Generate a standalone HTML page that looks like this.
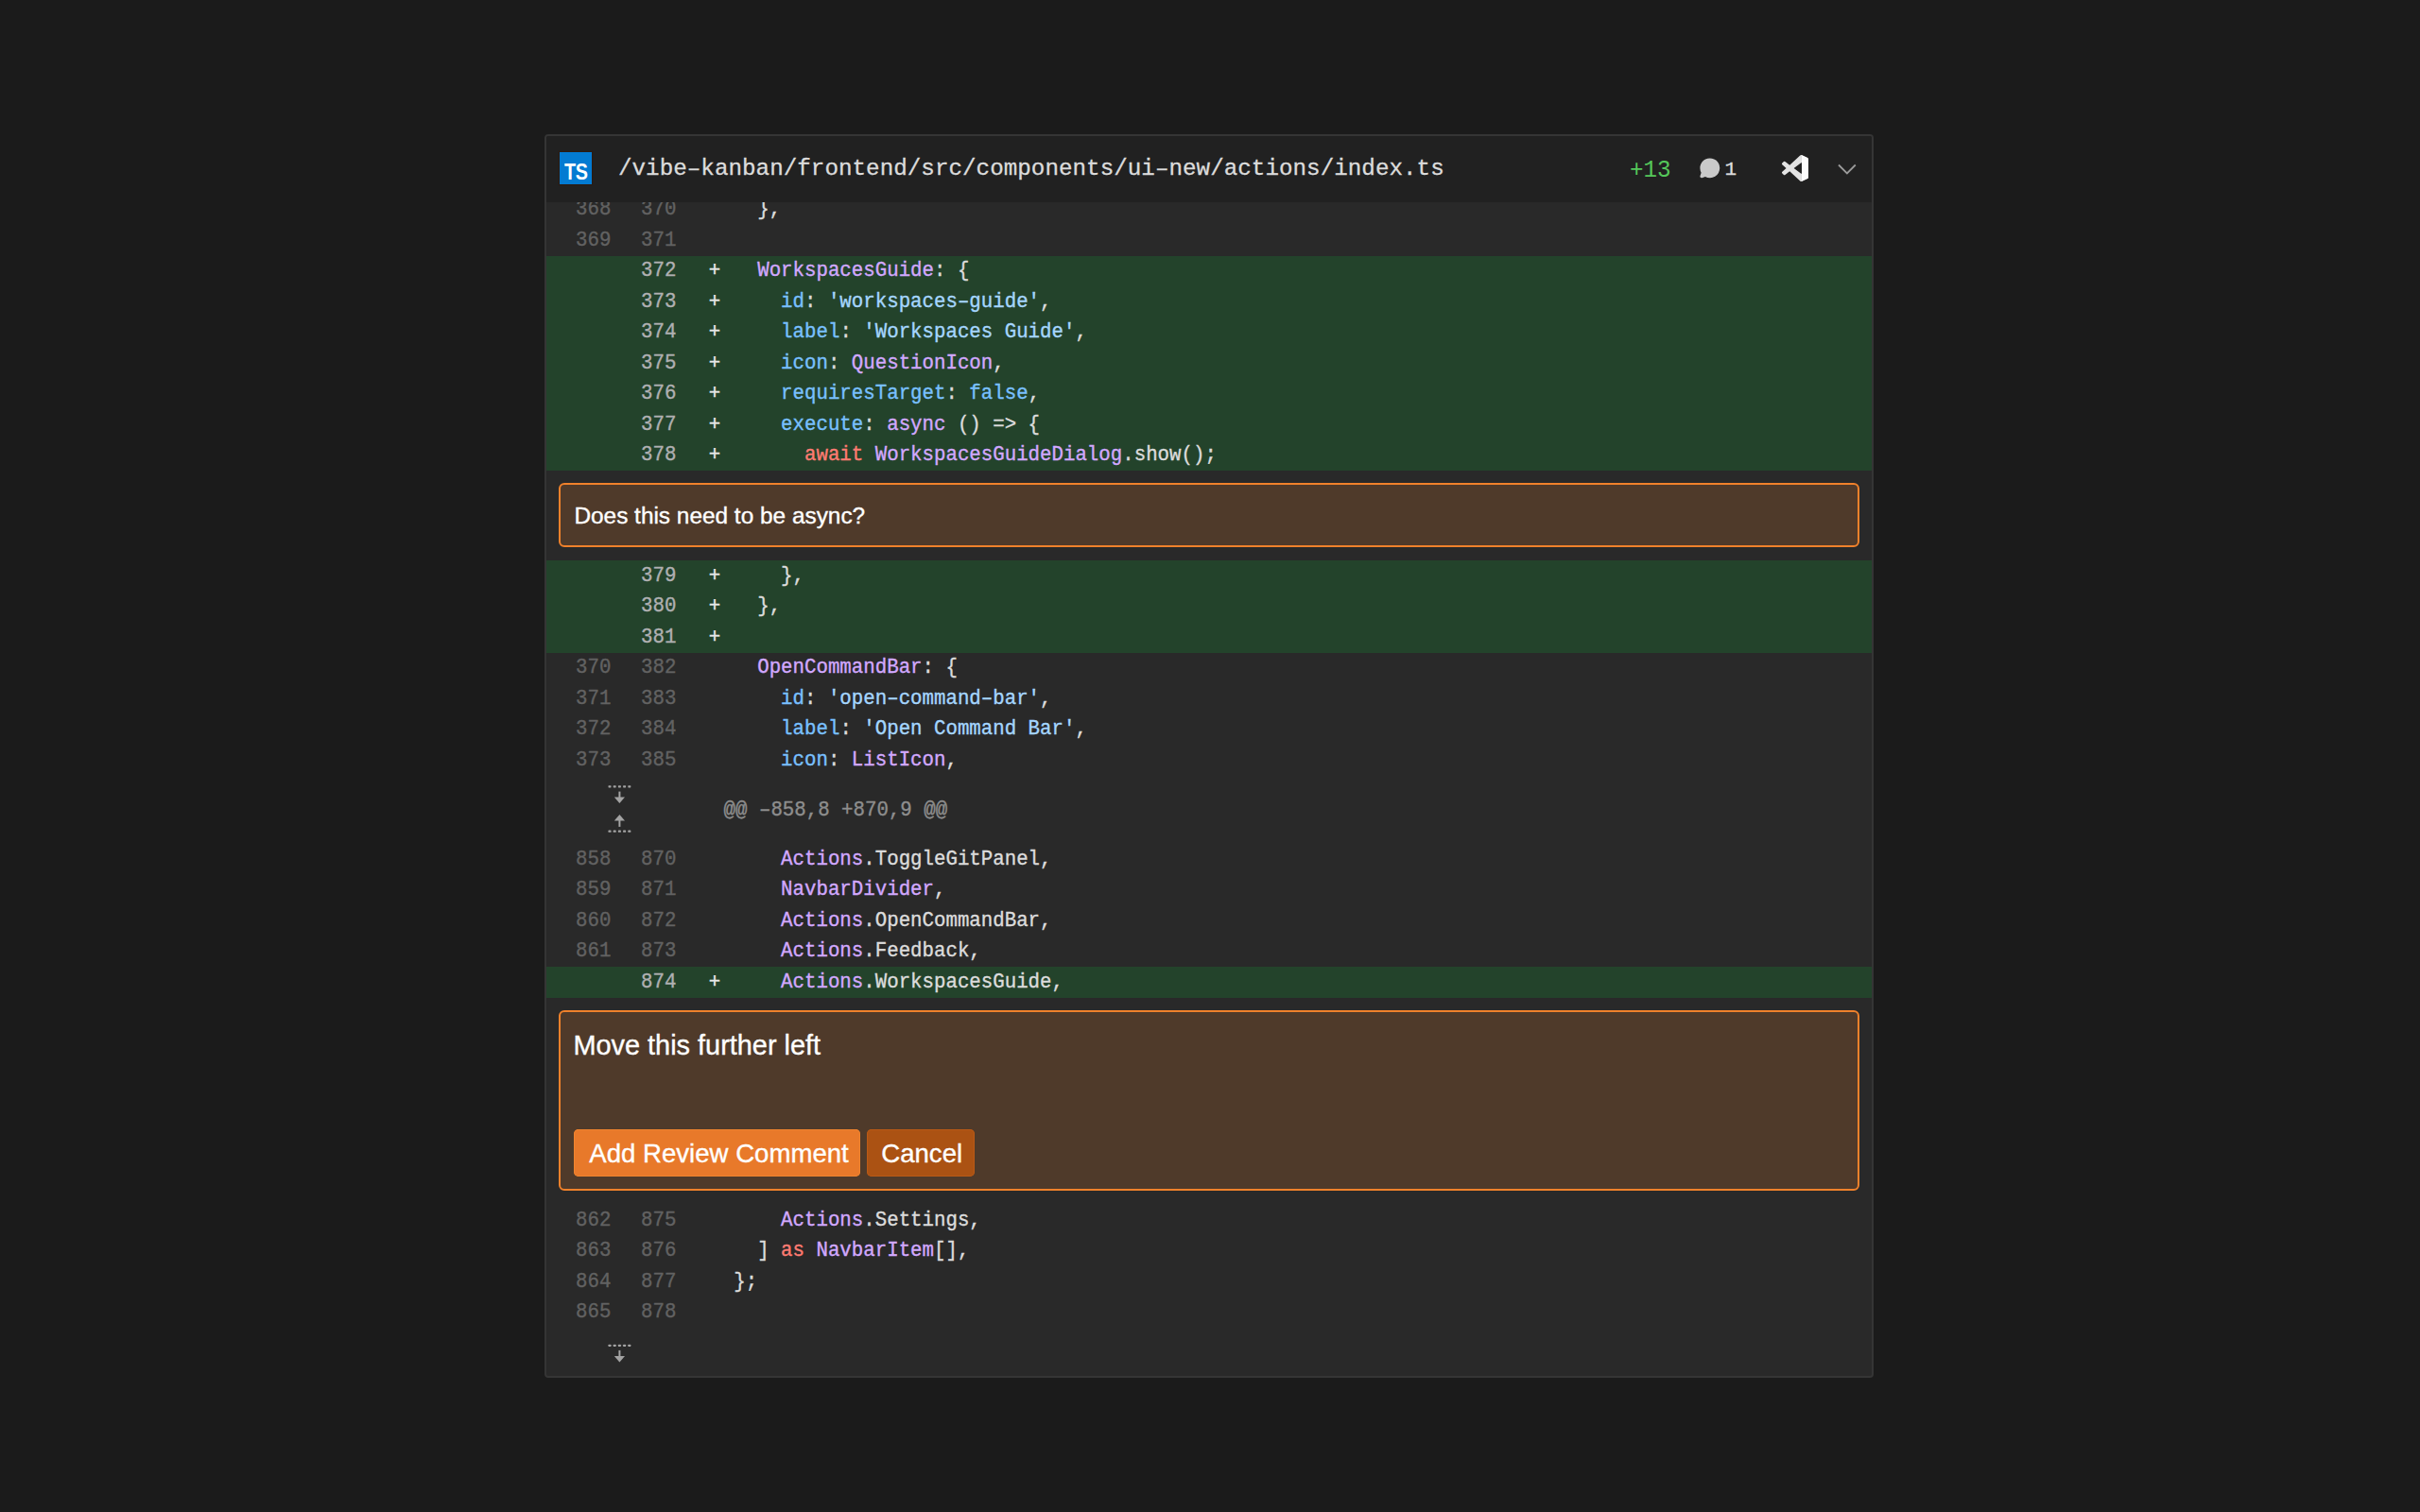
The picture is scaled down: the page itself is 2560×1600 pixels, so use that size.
<!DOCTYPE html>
<html><head><meta charset="utf-8"><style>
*{box-sizing:border-box;margin:0;padding:0}
html,body{width:2560px;height:1600px;background:#1b1b1b;overflow:hidden}
.card{position:absolute;left:576px;top:142px;width:1406px;height:1316px;border:2px solid #353535;border-radius:4px;background:#292929;overflow:hidden}
.hdr{position:absolute;left:0;top:0;right:0;height:70px;background:#212121;z-index:5}
.row{position:absolute;left:0;right:0;height:32.5px;line-height:32.5px;font-family:"Liberation Mono",monospace;font-size:20.76px;color:#dcdcdc;white-space:pre}
.row.add{background:#23432b}
.row>span{position:absolute;top:0.7px;transform:scaleY(1.1);transform-origin:0 21.8px;-webkit-text-stroke:0.35px currentColor}
.ln1,.ln2{color:#626262;text-align:right;width:37.38px}
.add .ln2{color:#b0b0b2}
.ln1{left:31.00px}
.ln2{left:100.00px}
.pl{left:171.80px;color:#e8e8e8}
.code{left:198.30px}
.k{color:#79c0ff} .s{color:#a5d6ff} .e{color:#d2a8ff} .w{color:#ff7b72}
.cbox{position:absolute;left:13.40px;width:1375.40px;border:2px solid #f0812b;border-radius:6px;background:#4f3a2a;font-family:"Liberation Sans",sans-serif;color:#fff;-webkit-text-stroke:0.35px #fff}
.ctext1{position:absolute;left:14px;top:18px;font-size:24.4px;line-height:30px}
.ctext2{position:absolute;left:13px;top:18.5px;font-size:28.9px;line-height:34px}
.btn{position:absolute;top:124.00px;height:50.2px;border-radius:5px;font-size:27.6px;line-height:50px;color:#fff;text-align:center}
.b1{left:13.60px;width:303.10px;background:#e8792a;box-shadow:inset 0 0 0 1px #f0842f;padding-left:4px;padding-top:1.5px}
.b2{left:323.80px;width:114.00px;background:#ab5213;box-shadow:inset 0 0 0 1px #bb5a16;padding-left:2px;padding-top:1.5px}
.htxt{position:absolute;left:187.60px;line-height:32.5px;font-family:"Liberation Mono",monospace;font-size:20.76px;color:#8e8e8e;white-space:pre;transform:scaleY(1.1);transform-origin:0 21.8px;-webkit-text-stroke:0.35px currentColor}
.mono{font-family:"Liberation Mono",monospace;white-space:pre;position:absolute;-webkit-text-stroke:0.3px currentColor}
</style></head>
<body>
<div class="card">
<div class="hdr">
<div style="position:absolute;left:13.50px;top:17.00px;width:34.5px;height:34px;background:#037bd2;box-shadow:0 0 0 1.3px #2a1c14"><span style="position:absolute;left:5.6px;top:8.6px;line-height:23px;font-family:'Liberation Sans',sans-serif;font-weight:bold;font-size:23px;color:#fff;letter-spacing:-0.5px;transform:scale(0.86,1.04);transform-origin:0 0;display:block;white-space:pre">TS</span></div>
<div class="mono" style="left:76.00px;top:14.50px;font-size:24.28px;line-height:40px;color:#dcdcdc">/vibe–kanban/frontend/src/components/ui–new/actions/index.ts</div>
<div class="mono" style="left:1146.00px;top:16.50px;font-size:24.28px;line-height:40px;color:#55c75a;-webkit-text-stroke:0;transform:scaleY(1.1);transform-origin:0 26.4px">+13</div>
<svg style="position:absolute;left:1217.70px;top:21.00px" width="25.7" height="25.7" viewBox="0 0 256 256"><path fill="#c9c9c9" d="M232,128A104,104,0,0,1,79.12,219.82L45.07,231.17a16,16,0,0,1-20.24-20.24l11.35-34.05A104,104,0,1,1,232,128Z"/></svg>
<div class="mono" style="left:1246.50px;top:16.40px;font-size:21px;line-height:40px;color:#dedede">1</div>
<svg style="position:absolute;left:1307.00px;top:20.00px" width="28" height="28" viewBox="0 0 24 24"><defs><clipPath id="vc"><path d="M23.15 2.587L18.21.21a1.494 1.494 0 0 0-1.705.29l-9.46 8.63-4.12-3.128a.999.999 0 0 0-1.276.057L.327 7.261A1 1 0 0 0 .326 8.74L3.899 12 .326 15.26a1 1 0 0 0 .001 1.479L1.65 17.94a.999.999 0 0 0 1.276.057l4.12-3.128 9.46 8.63a1.492 1.492 0 0 0 1.704.29l4.942-2.377A1.5 1.5 0 0 0 24 20.06V3.939a1.5 1.5 0 0 0-.85-1.352zm-5.146 14.861L10.826 12l7.178-5.448v10.896z"/></clipPath></defs><path fill="#e3e3e3" d="M23.15 2.587L18.21.21a1.494 1.494 0 0 0-1.705.29l-9.46 8.63-4.12-3.128a.999.999 0 0 0-1.276.057L.327 7.261A1 1 0 0 0 .326 8.74L3.899 12 .326 15.26a1 1 0 0 0 .001 1.479L1.65 17.94a.999.999 0 0 0 1.276.057l4.12-3.128 9.46 8.63a1.492 1.492 0 0 0 1.704.29l4.942-2.377A1.5 1.5 0 0 0 24 20.06V3.939a1.5 1.5 0 0 0-.85-1.352zm-5.146 14.861L10.826 12l7.178-5.448v10.896z"/><g clip-path="url(#vc)"><rect x="17.4" y="0" width="7" height="24" fill="#fbfbfb"/><rect x="17.1" y="0" width="0.5" height="24" fill="#c4c4c4"/></g></svg>
<svg style="position:absolute;left:1366.00px;top:29.00px" width="20" height="12" viewBox="0 0 20 12"><path d="M1 1.5l8.9 8.9 8.9-8.9" fill="none" stroke="#9a9a9a" stroke-width="1.8"/></svg>
</div>
<div class="row" style="top:61.60px"><span class="ln1">368</span><span class="ln2">370</span><span class="pl"></span><span class="code">  },</span></div>
<div class="row" style="top:94.10px"><span class="ln1">369</span><span class="ln2">371</span><span class="pl"></span><span class="code"></span></div>
<div class="row add" style="top:126.60px"><span class="ln1"></span><span class="ln2">372</span><span class="pl">+</span><span class="code">  <span class="e">WorkspacesGuide</span>: {</span></div>
<div class="row add" style="top:159.10px"><span class="ln1"></span><span class="ln2">373</span><span class="pl">+</span><span class="code">    <span class="k">id</span>: <span class="s">&#x27;workspaces–guide&#x27;</span>,</span></div>
<div class="row add" style="top:191.60px"><span class="ln1"></span><span class="ln2">374</span><span class="pl">+</span><span class="code">    <span class="k">label</span>: <span class="s">&#x27;Workspaces Guide&#x27;</span>,</span></div>
<div class="row add" style="top:224.10px"><span class="ln1"></span><span class="ln2">375</span><span class="pl">+</span><span class="code">    <span class="k">icon</span>: <span class="e">QuestionIcon</span>,</span></div>
<div class="row add" style="top:256.60px"><span class="ln1"></span><span class="ln2">376</span><span class="pl">+</span><span class="code">    <span class="k">requiresTarget</span>: <span class="k">false</span>,</span></div>
<div class="row add" style="top:289.10px"><span class="ln1"></span><span class="ln2">377</span><span class="pl">+</span><span class="code">    <span class="k">execute</span>: <span class="e">async</span> () =&gt; {</span></div>
<div class="row add" style="top:321.60px"><span class="ln1"></span><span class="ln2">378</span><span class="pl">+</span><span class="code">      <span class="w">await</span> <span class="e">WorkspacesGuideDialog</span>.show();</span></div>
<div class="cbox" style="top:367.40px;height:67.8px"><div class="ctext1">Does this need to be async?</div></div>
<div class="row add" style="top:449.10px"><span class="ln1"></span><span class="ln2">379</span><span class="pl">+</span><span class="code">    },</span></div>
<div class="row add" style="top:481.60px"><span class="ln1"></span><span class="ln2">380</span><span class="pl">+</span><span class="code">  },</span></div>
<div class="row add" style="top:514.10px"><span class="ln1"></span><span class="ln2">381</span><span class="pl">+</span><span class="code"></span></div>
<div class="row" style="top:546.60px"><span class="ln1">370</span><span class="ln2">382</span><span class="pl"></span><span class="code">  <span class="e">OpenCommandBar</span>: {</span></div>
<div class="row" style="top:579.10px"><span class="ln1">371</span><span class="ln2">383</span><span class="pl"></span><span class="code">    <span class="k">id</span>: <span class="s">&#x27;open–command–bar&#x27;</span>,</span></div>
<div class="row" style="top:611.60px"><span class="ln1">372</span><span class="ln2">384</span><span class="pl"></span><span class="code">    <span class="k">label</span>: <span class="s">&#x27;Open Command Bar&#x27;</span>,</span></div>
<div class="row" style="top:644.10px"><span class="ln1">373</span><span class="ln2">385</span><span class="pl"></span><span class="code">    <span class="k">icon</span>: <span class="e">ListIcon</span>,</span></div>
<span class="htxt" style="top:697.60px">@@ –858,8 +870,9 @@</span>
<div class="row" style="top:749.10px"><span class="ln1">858</span><span class="ln2">870</span><span class="pl"></span><span class="code">    <span class="e">Actions</span>.ToggleGitPanel,</span></div>
<div class="row" style="top:781.60px"><span class="ln1">859</span><span class="ln2">871</span><span class="pl"></span><span class="code">    <span class="e">NavbarDivider</span>,</span></div>
<div class="row" style="top:814.10px"><span class="ln1">860</span><span class="ln2">872</span><span class="pl"></span><span class="code">    <span class="e">Actions</span>.OpenCommandBar,</span></div>
<div class="row" style="top:846.60px"><span class="ln1">861</span><span class="ln2">873</span><span class="pl"></span><span class="code">    <span class="e">Actions</span>.Feedback,</span></div>
<div class="row add" style="top:879.10px"><span class="ln1"></span><span class="ln2">874</span><span class="pl">+</span><span class="code">    <span class="e">Actions</span>.WorkspacesGuide,</span></div>
<div class="cbox" style="top:924.70px;height:191.6px"><div class="ctext2">Move this further left</div><div class="btn b1">Add Review Comment</div><div class="btn b2">Cancel</div></div>
<div class="row" style="top:1131.10px"><span class="ln1">862</span><span class="ln2">875</span><span class="pl"></span><span class="code">    <span class="e">Actions</span>.Settings,</span></div>
<div class="row" style="top:1163.60px"><span class="ln1">863</span><span class="ln2">876</span><span class="pl"></span><span class="code">  ] <span class="w">as</span> <span class="e">NavbarItem</span>[],</span></div>
<div class="row" style="top:1196.10px"><span class="ln1">864</span><span class="ln2">877</span><span class="pl"></span><span class="code">};</span></div>
<div class="row" style="top:1228.60px"><span class="ln1">865</span><span class="ln2">878</span><span class="pl"></span><span class="code"></span></div>
<svg style="position:absolute;left:-578.00px;top:-144.00px" width="2560" height="1600" viewBox="0 0 2560 1600" fill="#a3a3a3">
<rect x="643.50" y="831.20" width="3.0" height="2.2" rx="0.6"/><rect x="648.70" y="831.20" width="3.0" height="2.2" rx="0.6"/><rect x="653.90" y="831.20" width="3.0" height="2.2" rx="0.6"/><rect x="659.10" y="831.20" width="3.0" height="2.2" rx="0.6"/><rect x="664.30" y="831.20" width="3.0" height="2.2" rx="0.6"/><rect x="654.40" y="837.60" width="2.0" height="6.50"/><path d="M649.80 843.60L661.00 843.60L655.40 850.10z"/><path d="M649.80 868.40L661.00 868.40L655.40 861.90z"/><rect x="654.40" y="867.90" width="2.0" height="7.00"/><rect x="643.50" y="878.60" width="3.0" height="2.2" rx="0.6"/><rect x="648.70" y="878.60" width="3.0" height="2.2" rx="0.6"/><rect x="653.90" y="878.60" width="3.0" height="2.2" rx="0.6"/><rect x="659.10" y="878.60" width="3.0" height="2.2" rx="0.6"/><rect x="664.30" y="878.60" width="3.0" height="2.2" rx="0.6"/>
<rect x="643.50" y="1422.70" width="3.0" height="2.2" rx="0.6"/><rect x="648.70" y="1422.70" width="3.0" height="2.2" rx="0.6"/><rect x="653.90" y="1422.70" width="3.0" height="2.2" rx="0.6"/><rect x="659.10" y="1422.70" width="3.0" height="2.2" rx="0.6"/><rect x="664.30" y="1422.70" width="3.0" height="2.2" rx="0.6"/><rect x="654.40" y="1428.90" width="2.0" height="6.70"/><path d="M649.80 1435.10L661.00 1435.10L655.40 1441.60z"/>
</svg>
</div>
</body></html>
